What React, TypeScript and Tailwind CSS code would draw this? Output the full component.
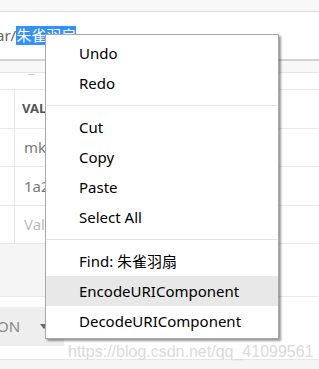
const rows = [
  { text: 'VAL', cls: 'text-[13px] font-bold text-[#555] pl-[7px]' },
  { text: 'mk', cls: 'text-[15px] text-[#777] pl-[9px]' },
  { text: '1a2', cls: 'text-[15px] text-[#777] pl-[9px]' },
  { text: 'Val', cls: 'text-[15px] text-[#bbb] pl-[9px]' },
]

const MenuItem = ({ label, active }: { label: string; active?: boolean }) => (
  <div className={`h-[30px] flex items-center pl-[33px] text-[15px] text-black ${active ? 'bg-[#e8e8e8]' : ''}`}>
    {label}
  </div>
)

const Separator = () => (
  <div className="h-[14px] flex items-center px-[1px]">
    <div className="h-px w-full bg-[#e3e3e3]" />
  </div>
)

const App = () => {
  return (
    <div className="relative w-[319px] h-[369px] overflow-hidden bg-white font-['Noto_Sans','Noto_Sans_CJK_SC',sans-serif]">
      <div className="h-[12px] bg-[#f8f8f8] border-b border-[#dadada]" />

      <div className="h-[47px] flex items-center text-[15px] text-[#666] whitespace-nowrap">
        <span className="-ml-[4px]">ar/</span>
        <span className="bg-[#3390ff] text-white leading-[19px]">朱雀羽扇</span>
      </div>

      <div className="h-[14px] bg-[#f8f8f8] border-t-2 border-[#d2d2d2] border-b border-b-[#e6e6e6]" />
      <div className="h-[17px] border-b border-[#e8e8e8] relative">
        <div className="absolute left-[28px] top-[1px] w-[7px] h-px bg-[#cfcfcf]" />
      </div>

      {rows.map((r) => (
        <div key={r.text} className="h-[38.5px] flex border-b border-[#e8e8e8]">
          <div className="w-[15px] border-r border-[#e8e8e8]" />
          <div className={`flex items-center ${r.cls}`}>{r.text}</div>
        </div>
      ))}

      <div className="h-[53px] flex border-b border-[#e8e8e8]">
        <div className="w-[240px] bg-[#f5f5f5]" />
        <div className="flex-1 bg-white" />
      </div>

      <div className="h-[62px] pt-[10px]">
        <div className="w-[64px] h-[39px] bg-[#eeeeee] flex items-center text-[15px] text-[#888]">
          <span className="-ml-[3px]">ON</span>
          <svg className="ml-[20px]" width="8" height="6" viewBox="0 0 8 6">
            <path d="M0 0 L8 0 L4 5 Z" fill="#666" />
          </svg>
        </div>
      </div>

      <div className="h-[10px] bg-[#f5f5f5] border-t border-[#e6e6e6]" />

      <div className="absolute left-[68px] top-[343px] font-['Liberation_Sans',sans-serif] text-[16px] leading-[18px] text-[#dadada] whitespace-nowrap">
        https://blog.csdn.net/qq_41099561
      </div>

      <div className="absolute left-[45px] top-[34px] w-[234px] pt-[3px] pb-[2px] bg-white border border-[#a8a8a8] shadow-[2px_2px_2px_rgba(0,0,0,0.4)] whitespace-nowrap">
        <MenuItem label="Undo" />
        <MenuItem label="Redo" />
        <Separator />
        <MenuItem label="Cut" />
        <MenuItem label="Copy" />
        <MenuItem label="Paste" />
        <MenuItem label="Select All" />
        <Separator />
        <MenuItem label="Find: 朱雀羽扇" />
        <MenuItem label="EncodeURIComponent" active />
        <MenuItem label="DecodeURIComponent" />
      </div>
    </div>
  )
}

export default App
